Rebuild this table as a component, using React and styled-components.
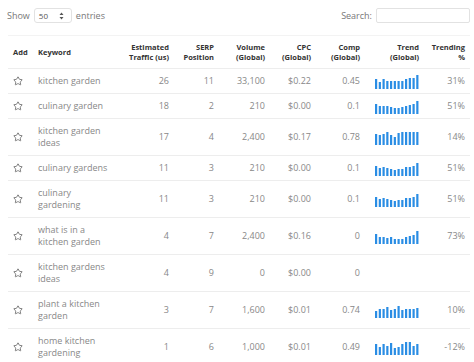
import React from "react";
import styled, { createGlobalStyle } from "styled-components";
import { Star } from "lucide-react";

const GlobalStyle = createGlobalStyle`
  body {
    margin: 0;
    background: #fff;
    font-family: "Open Sans", "Liberation Sans", sans-serif;
  }
`;

const rows = [
  { kw: ["kitchen garden"], traffic: 26, serp: 11, volume: "33,100", cpc: "$0.22", comp: "0.45", trend: [10, 7, 10, 8, 8, 8, 8, 8, 10, 11, 11, 14], pct: "31%" },
  { kw: ["culinary garden"], traffic: 18, serp: 2, volume: "210", cpc: "$0.00", comp: "0.1", trend: [10, 8, 8, 8, 7, 6, 6, 7, 8, 9, 10, 13], pct: "51%" },
  { kw: ["kitchen garden", "ideas"], traffic: 17, serp: 4, volume: "2,400", cpc: "$0.17", comp: "0.78", trend: [11, 10, 11, 13, 10, 8, 12, 13, 13, 13, 13, 13], pct: "14%" },
  { kw: ["culinary gardens"], traffic: 11, serp: 3, volume: "210", cpc: "$0.00", comp: "0.1", trend: [10, 8, 9, 8, 7, 6, 7, 7, 9, 9, 10, 13], pct: "51%" },
  { kw: ["culinary", "gardening"], traffic: 11, serp: 3, volume: "210", cpc: "$0.00", comp: "0.1", trend: [10, 8, 9, 8, 7, 6, 7, 7, 9, 9, 10, 13], pct: "51%" },
  { kw: ["what is in a", "kitchen garden"], traffic: 4, serp: 7, volume: "2,400", cpc: "$0.16", comp: "0", trend: [10, 7, 7, 6, 7, 5, 5, 5, 7, 8, 9, 13], pct: "73%" },
  { kw: ["kitchen gardens", "ideas"], traffic: 4, serp: 9, volume: "0", cpc: "$0.00", comp: "0", trend: null, pct: "" },
  { kw: ["plant a kitchen", "garden"], traffic: 3, serp: 7, volume: "1,600", cpc: "$0.01", comp: "0.74", trend: [7, 9, 9, 11, 8, 9, 12, 8, 9, 9, 9, 10], pct: "10%" },
  { kw: ["home kitchen", "gardening"], traffic: 1, serp: 6, volume: "1,000", cpc: "$0.01", comp: "0.49", trend: [11, 8, 11, 9, 12, 7, 8, 11, 13, 13, 9, 11], pct: "-12%" },
];

const columns = [
  { label: ["Add"], width: 25, align: "left" },
  { label: ["Keyword"], width: 87, align: "left" },
  { label: ["Estimated", "Traffic (us)"], width: 54 },
  { label: ["SERP", "Position"], width: 45 },
  { label: ["Volume", "(Global)"], width: 51 },
  { label: ["CPC", "(Global)"], width: 46 },
  { label: ["Comp", "(Global)"], width: 49 },
  { label: ["Trend", "(Global)"], width: 59 },
  { label: ["Trending", "%"], width: 46 },
];

const Lines = ({ parts }) =>
  parts.map((p, i) => (
    <React.Fragment key={i}>
      {i > 0 && <br />}
      {p}
    </React.Fragment>
  ));

const TrendBars = ({ values }) => (
  <svg width="45" height="15" viewBox="0 0 45 15">
    {values.map((v, i) => (
      <rect key={i} x={i * 3.75} y={15 - v} width="2.2" height={v} fill="#2a8de4" />
    ))}
  </svg>
);

const App = () => {
  return (
    <Page>
      <GlobalStyle />
      <Toolbar>
        <Label>
          Show
          <Select>
            <span>50</span>
            <svg width="5" height="8" viewBox="0 0 5 8">
              <path d="M2.5 0.5 L4.5 3 H0.5 Z M2.5 7.5 L4.5 5 H0.5 Z" fill="#555" />
            </svg>
          </Select>
          entries
        </Label>
        <Label>
          Search:
          <SearchBox />
        </Label>
      </Toolbar>
      <Table>
        <colgroup>
          {columns.map((c, i) => (
            <col key={i} style={{ width: c.width }} />
          ))}
        </colgroup>
        <thead>
          <tr>
            {columns.map((c, i) => (
              <Th key={i} $align={c.align}>
                <Lines parts={c.label} />
              </Th>
            ))}
          </tr>
        </thead>
        <tbody>
          {rows.map((r, i) => (
            <tr key={i}>
              <Td $align="left">
                <StarIcon size={10} strokeWidth={1.6} />
              </Td>
              <Td $align="left">
                <Lines parts={r.kw} />
              </Td>
              <Td>{r.traffic}</Td>
              <Td>{r.serp}</Td>
              <Td>{r.volume}</Td>
              <Td>{r.cpc}</Td>
              <Td>{r.comp}</Td>
              <TrendCell>{r.trend && <TrendBars values={r.trend} />}</TrendCell>
              <Td>{r.pct}</Td>
            </tr>
          ))}
        </tbody>
      </Table>
    </Page>
  );
};

export default App;

const Page = styled.div`
  width: 474px;
  padding: 8px 4px 0 8px;
  box-sizing: border-box;
  color: #888;
`;

const Toolbar = styled.div`
  display: flex;
  justify-content: space-between;
  align-items: center;
  height: 15px;
  margin-left: -1px;
`;

const Label = styled.label`
  display: flex;
  align-items: center;
  gap: 4px;
  font-size: 9px;
  color: #777;
`;

const Select = styled.div`
  width: 38px;
  height: 15px;
  box-sizing: border-box;
  border: 1px solid #e2e2e2;
  border-radius: 3px;
  display: flex;
  align-items: center;
  justify-content: space-between;
  padding: 0 7px 0 4px;
  font-size: 8px;
  color: #555;
`;

const SearchBox = styled.div`
  width: 94px;
  height: 15px;
  box-sizing: border-box;
  border: 1px solid #e2e2e2;
  border-radius: 2px;
`;

const Table = styled.table`
  margin-top: 12px;
  width: 462px;
  table-layout: fixed;
  border-collapse: collapse;
  border-top: 1px solid #f3f3f3;
  font-size: 9px;

  tr {
    border-bottom: 1px solid #ededed;
  }
`;

const Th = styled.th`
  text-align: ${(p) => p.$align || "right"};
  padding: 6px 5px;
  font-size: 7.5px;
  font-weight: 700;
  line-height: 10px;
  color: #333;
  white-space: nowrap;
  vertical-align: middle;
`;

const Td = styled.td`
  text-align: ${(p) => p.$align || "right"};
  padding: 6px 5px;
  line-height: 12px;
  color: #888;
  white-space: nowrap;
  vertical-align: middle;
`;

const TrendCell = styled.td`
  padding: 0 5px 0 10px;
  vertical-align: middle;
  line-height: 0;

  svg {
    display: block;
  }
`;

const StarIcon = styled(Star)`
  display: block;
  color: #444;
`;
